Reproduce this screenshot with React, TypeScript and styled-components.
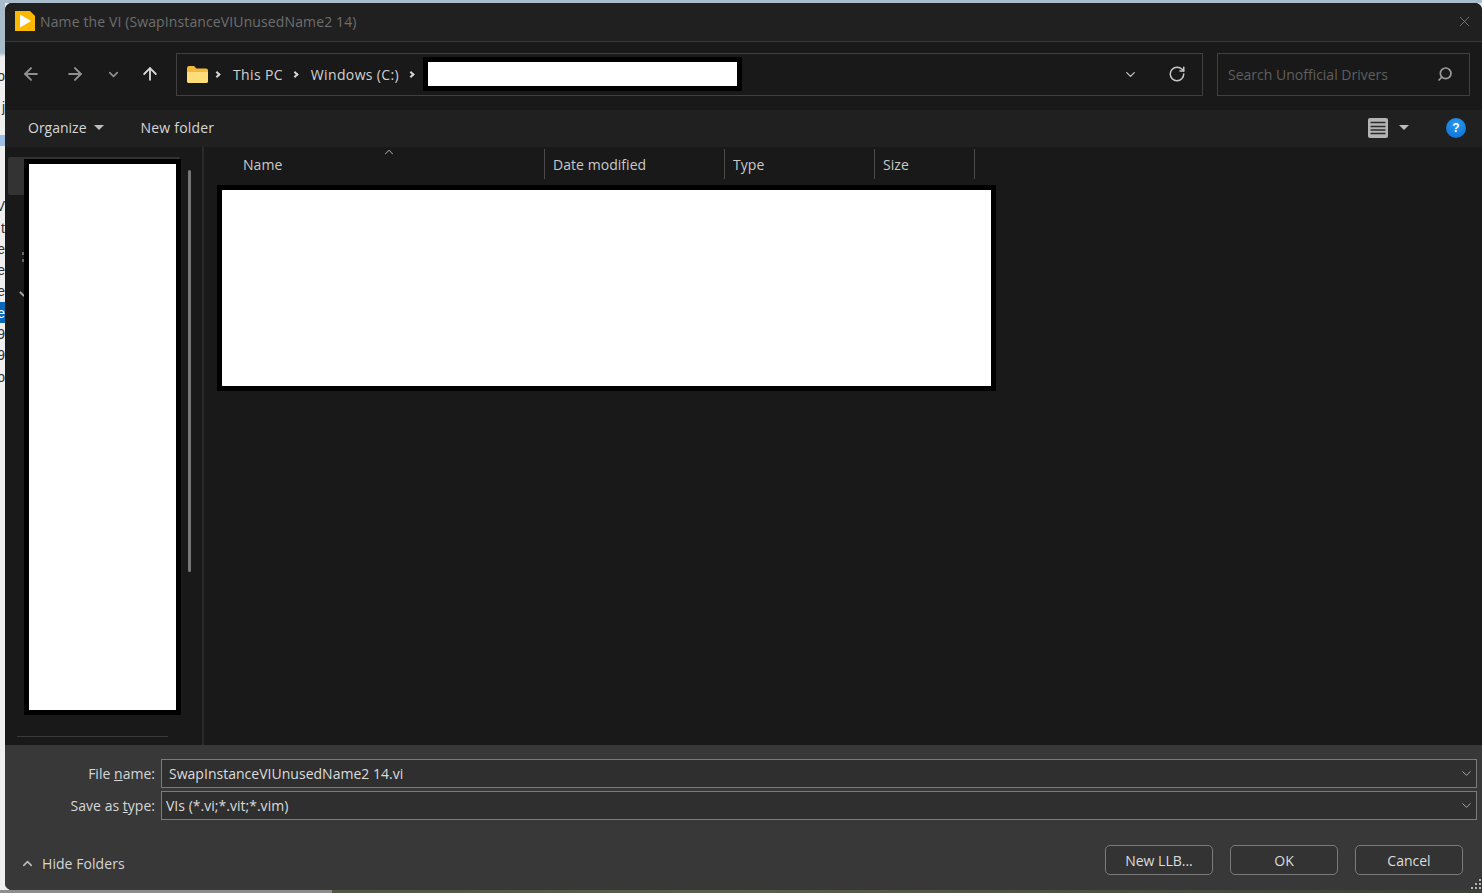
import React from "react";
import styled, { createGlobalStyle } from "styled-components";
import { ArrowLeft, ArrowRight, ArrowUp, ChevronDown, ChevronUp, RotateCw, Search, X } from "lucide-react";

const Global = createGlobalStyle`
  html, body { margin: 0; padding: 0; background: #e9e9e9; }
  * { box-sizing: border-box; }
  body { font-family: "Open Sans", "Noto Sans", "Liberation Sans", sans-serif; overflow: hidden; }
`;

const Desktop = styled.div`
  width: 1482px; height: 893px; display: grid; overflow: hidden;
  grid-template-columns: 5px 1477px; grid-template-rows: 3px 887px 3px;
`;
const TopStrip = styled.div`grid-column: 1 / 3; background: #a9bccb;`;
const LeftStrip = styled.div`
  background: linear-gradient(#a9bccb 0 50px, #efefef 54px);
  overflow: hidden; display: flex; flex-direction: column; padding-top: 62px;
`;
const Peek = styled.div<{ $gap?: number; $selected?: boolean }>`
  height: 21.3px; margin-top: ${p => p.$gap ?? 0}px; width: 5px;
  display: flex; justify-content: flex-end; align-items: center;
  font: 14px "Liberation Sans", sans-serif;
  color: ${p => (p.$selected ? "#fff" : "#333")};
  background: ${p => (p.$selected ? "#0a68b8" : "transparent")};
  flex: none; overflow: hidden;
`;
const PeekSwatch = styled.div`
  height: 11px; margin-top: 17px; width: 5px; flex: none; background: #9fc0e6;
`;
const BottomStrip = styled.div`
  grid-column: 1 / 3; display: grid; grid-template-columns: 332px 1fr;
  background: linear-gradient(90deg, #4a4f3a, #5a5f48 50%, #3c4034);
`;
const BottomStripLeft = styled.div`background: #8d8d8d;`;

const Window = styled.div`
  display: flex; flex-direction: column; background: #191919;
  border-radius: 7px 7px 0 7px; overflow: hidden; position: relative;
`;
const TitleBar = styled.div`
  height: 39px; flex: none; background: #202020; border-bottom: 1px solid #383838;
  display: flex; align-items: center; padding: 0 9px 2px 10px;
`;
const TitleText = styled.span`
  margin-left: 5px; font-size: 14px; color: #6e6e6e; flex: 1; letter-spacing: 0.12px;
`;
const CloseBtn = styled.span`display: flex; color: #8e8e8e;`;

const NavBar = styled.div`
  height: 68px; flex: none; background: #191919; display: flex; align-items: center;
  padding: 0 12px 4px 0;
`;
const NavIcon = styled.span<{ $w: number; $c?: string }>`
  width: ${p => p.$w}px; display: flex; justify-content: center; flex: none;
  color: ${p => p.$c ?? "#909090"};
`;
const AddressBar = styled.div`
  margin-left: 9px; width: 1027px; height: 43px; border: 1.5px solid #404040; flex: none;
  display: flex; align-items: center; padding: 0 16px 0 10px; color: #cfcfcf; font-size: 14px;
`;
const Crumb = styled.span`margin-left: 12px; color: #d2d2d2; letter-spacing: 0.35px;`;
const Sep = styled.span<{ $m: number }>`
  margin-left: ${p => p.$m}px; width: 5px; height: 5px; flex: none;
  border-top: 2px solid #d4d4d4; border-right: 2px solid #d4d4d4; transform: rotate(45deg) translate(-1px, 1px);
`;
const Redact = styled.div`background: #fff; border: 5px solid #000; flex: none;`;
const AddressRedact = styled(Redact)`width: 319px; height: 34px; margin-left: 8px;`;
const AddressTools = styled.div`margin-left: auto; display: flex; align-items: center; gap: 30px; color: #c8c8c8;`;
const SearchBox = styled.div`
  margin-left: 14px; width: 253px; height: 43px; border: 1.5px solid #404040; flex: none;
  display: flex; align-items: center; justify-content: space-between; padding: 0 16px 0 10px;
  font-size: 14px; color: #5f5f5f;
`;
const SearchGlass = styled(Search)`transform: scaleX(-1); color: #9a9a9a;`;

const Toolbar = styled.div`
  height: 37px; flex: none; background: #202020; display: flex; align-items: center;
  padding: 0 16px 2px 23px; font-size: 14px; color: #d6d6d6;
`;
const Caret = styled.span<{ $m: number }>`
  margin-left: ${p => p.$m}px; width: 0; height: 0; flex: none;
  border-left: 5px solid transparent; border-right: 5px solid transparent; border-top: 5px solid #bdbdbd;
`;
const NewFolder = styled.span`margin-left: 37px; margin-right: auto; letter-spacing: 0.2px;`;
const HelpDot = styled.span`
  margin-left: 37px; width: 20px; height: 20px; border-radius: 50%; flex: none;
  background: radial-gradient(circle at 50% 30%, #2a98f0, #0a6fd0);
  display: flex; align-items: center; justify-content: center;
  font: bold 12px "Liberation Sans", sans-serif; color: #fff;
`;

const Body = styled.div`flex: 1; min-height: 0; display: flex; background: #191919;`;
const Sidebar = styled.div`
  width: 199px; flex: none; position: relative; border-right: 2px solid #2a2a2a;
  padding: 12px 0 0 19px;
`;
const SelectedRow = styled.div`
  position: absolute; left: 3px; top: 10px; width: 172px; height: 38px; background: #333; border-radius: 2px;
`;
const SideRedact = styled(Redact)`position: relative; width: 157px; height: 556px;`;
const ScrollThumb = styled.div`
  position: absolute; left: 183px; top: 23px; width: 3px; height: 402px; background: #777; border-radius: 2px;
`;
const SideLine = styled.div`
  position: absolute; left: 12px; top: 589px; width: 151px; height: 1px; background: #3a3a3a;
`;
const PeekDot = styled.span<{ $top: number }>`
  position: absolute; left: 17px; top: ${p => p.$top}px; width: 2px; height: 3px; background: #666;
`;
const PeekChevron = styled.span`
  position: absolute; left: 14px; top: 146px; width: 6px; height: 2px; background: #aaa; transform: rotate(45deg);
`;

const Files = styled.div`flex: 1; display: flex; flex-direction: column; position: relative;`;
const HeaderRow = styled.div`
  height: 38px; flex: none; display: grid; grid-template-columns: 310px 180px 150px 100px;
  padding: 2px 0 6px 31px; font-size: 14px; color: #c9c9c9;
`;
const HeaderCell = styled.div`
  padding-left: 8px; display: flex; align-items: center;
  border-right: 1px solid #4a4a4a; letter-spacing: 0.05px;
`;
const SortUp = styled.span`position: absolute; left: 178px; top: -2px; color: #9a9a9a; display: flex;`;
const FileRedact = styled(Redact)`width: 779px; height: 206px; margin-left: 13px;`;

const Footer = styled.div`
  height: 145px; flex: none; background: #383838; display: flex; flex-direction: column;
  padding: 14px 5px 0 0; position: relative;
`;
const FieldRow = styled.div`display: flex; align-items: center; margin-bottom: 3px;`;
const FieldLabel = styled.div`
  width: 150px; flex: none; text-align: right; font-size: 14px; color: #d6d6d6; letter-spacing: 0.02px;
`;
const Field = styled.div<{ $pad: number }>`
  margin-left: 6px; flex: 1; height: 29px; background: #2f2f2f; border: 1.5px solid #7b7b7b;
  display: flex; align-items: center; justify-content: space-between;
  padding: 0 2px 0 ${p => p.$pad}px; font-size: 14px; color: #dcdcdc; letter-spacing: 0.02px;
`;
const FieldChevron = styled(ChevronDown)`color: #a5a5a5; flex: none;`;
const Actions = styled.div`
  display: flex; align-items: center; margin-top: 22px; padding-left: 15px;
`;
const HideFolders = styled.div`
  display: flex; align-items: center; gap: 7px; font-size: 14px; color: #d6d6d6;
  margin-right: auto; padding-top: 7px; letter-spacing: 0.06px;
`;
const ChevUp = styled(ChevronUp)`color: #bdbdbd;`;
const Btn = styled.button`
  width: 108px; height: 30px; margin-left: 17px; background: #333; border: 1.5px solid #7b7b7b;
  border-radius: 5px; color: #dcdcdc; font: 14px "Open Sans", "Noto Sans", sans-serif; padding: 0;
  &:last-child { margin-right: 14px; }
`;
const Grip = styled.svg`position: absolute; right: 0; bottom: 0;`;

export default function App() {
  return (
    <Desktop>
      <Global />
      <TopStrip />
      <LeftStrip>
        <Peek>o</Peek>
        <Peek $gap={10}>j</Peek>
        <PeekSwatch />
        <Peek $gap={50}>V</Peek>
        <Peek>t</Peek>
        <Peek>e</Peek>
        <Peek>e</Peek>
        <Peek>e</Peek>
        <Peek $selected>e</Peek>
        <Peek>9</Peek>
        <Peek>9</Peek>
        <Peek>o</Peek>
      </LeftStrip>
      <Window>
        <TitleBar>
          <svg width="20" height="20" viewBox="0 0 20 20">
            <path d="M0 0H15L20 5V20H0Z" fill="#fdb900" />
            <path d="M5 3.5 16 10 5 16.5Z" fill="#fff" />
          </svg>
          <TitleText>Name the VI (SwapInstanceVIUnusedName2 14)</TitleText>
          <CloseBtn><X size={17} strokeWidth={1} /></CloseBtn>
        </TitleBar>
        <NavBar>
          <NavIcon $w={52}><ArrowLeft size={20} strokeWidth={2.4} /></NavIcon>
          <NavIcon $w={36}><ArrowRight size={20} strokeWidth={2.4} /></NavIcon>
          <NavIcon $w={40}><ChevronDown size={15} strokeWidth={2.6} /></NavIcon>
          <NavIcon $w={34} $c="#d8d8d8"><ArrowUp size={20} strokeWidth={2.2} /></NavIcon>
          <AddressBar>
            <svg width="21" height="17" viewBox="0 0 21 17">
              <path d="M0 2a2 2 0 0 1 2-2h5l2.5 2.5H19a2 2 0 0 1 2 2V15a2 2 0 0 1-2 2H2a2 2 0 0 1-2-2Z" fill="#f3b93a" />
              <path d="M0 6h21v9a2 2 0 0 1-2 2H2a2 2 0 0 1-2-2Z" fill="#ffdc7a" />
            </svg>
            <Sep $m={8} />
            <Crumb>This PC</Crumb>
            <Sep $m={11} />
            <Crumb>Windows (C:)</Crumb>
            <Sep $m={11} />
            <AddressRedact />
            <AddressTools>
              <ChevronDown size={15} strokeWidth={2} />
              <RotateCw size={18} strokeWidth={2} />
            </AddressTools>
          </AddressBar>
          <SearchBox>
            <span>Search Unofficial Drivers</span>
            <SearchGlass size={16} strokeWidth={2.6} />
          </SearchBox>
        </NavBar>
        <Toolbar>
          <span>Organize</span>
          <Caret $m={7} />
          <NewFolder>New folder</NewFolder>
          <svg width="20" height="20" viewBox="0 0 20 20">
            <rect width="20" height="20" rx="2" fill="#b4b4b4" />
            <path d="M2.5 4.5h15M2.5 8.5h15M2.5 12h15M2.5 15.5h15" stroke="#2a2a2a" strokeWidth="1.3" />
          </svg>
          <Caret $m={11} />
          <HelpDot>?</HelpDot>
        </Toolbar>
        <Body>
          <Sidebar>
            <SelectedRow />
            <PeekDot $top={105} />
            <PeekDot $top={112} />
            <PeekChevron />
            <SideRedact />
            <ScrollThumb />
            <SideLine />
          </Sidebar>
          <Files>
            <SortUp><ChevronUp size={14} strokeWidth={1.8} /></SortUp>
            <HeaderRow>
              <HeaderCell>Name</HeaderCell>
              <HeaderCell>Date modified</HeaderCell>
              <HeaderCell>Type</HeaderCell>
              <HeaderCell>Size</HeaderCell>
            </HeaderRow>
            <FileRedact />
          </Files>
        </Body>
        <Footer>
          <FieldRow>
            <FieldLabel>File <u>n</u>ame:</FieldLabel>
            <Field $pad={7}>
              SwapInstanceVIUnusedName2 14.vi
              <FieldChevron size={15} strokeWidth={1.6} />
            </Field>
          </FieldRow>
          <FieldRow>
            <FieldLabel>Save as <u>t</u>ype:</FieldLabel>
            <Field $pad={4}>
              VIs (*.vi;*.vit;*.vim)
              <FieldChevron size={15} strokeWidth={1.6} />
            </Field>
          </FieldRow>
          <Actions>
            <HideFolders>
              <ChevUp size={15} strokeWidth={2.4} />
              Hide Folders
            </HideFolders>
            <Btn>New LLB...</Btn>
            <Btn>OK</Btn>
            <Btn>Cancel</Btn>
          </Actions>
          <Grip width="11" height="11" viewBox="0 0 11 11">
            <path d="M8 0h2v2H8zM4 4h2v2H4zM8 4h2v2H8zM0 8h2v2H0zM4 8h2v2H4zM8 8h2v2H8z" fill="#b5b5b5" />
          </Grip>
        </Footer>
      </Window>
      <BottomStrip><BottomStripLeft /><div /></BottomStrip>
    </Desktop>
  );
}
